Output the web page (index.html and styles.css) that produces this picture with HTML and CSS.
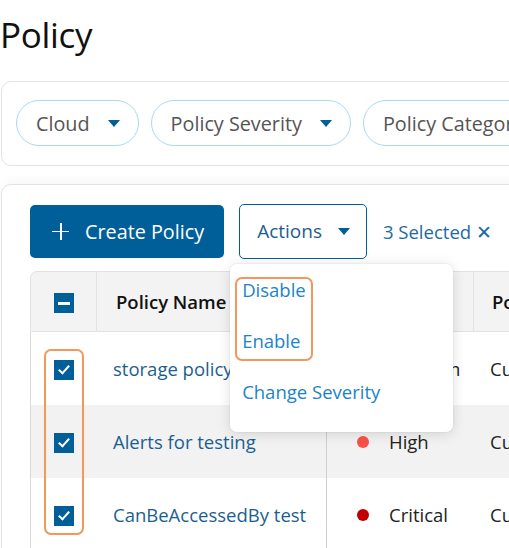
FILE: index.html
```html
<!DOCTYPE html>
<html lang="en">
<head>
  <meta charset="UTF-8">
  <meta name="viewport" content="width=device-width, initial-scale=1.0">
  <title>Policy</title>
  <link rel="stylesheet" href="styles.css">
</head>
<body>
  <div class="page">
    <h1 class="page-title">Policy</h1>

    <div class="card filters">
      <button class="pill">Cloud <span class="caret"></span></button>
      <button class="pill">Policy Severity <span class="caret"></span></button>
      <button class="pill">Policy Category <span class="caret"></span></button>
      <button class="pill">Policy Type <span class="caret"></span></button>
    </div>

    <div class="card list">
      <div class="toolbar">
        <button class="btn-primary"><span class="plus"></span>Create Policy</button>
        <div class="actions">
          <button class="btn-outline">Actions <span class="caret"></span></button>
          <div class="menu">
            <div class="menu-item">Disable</div>
            <div class="menu-item">Enable</div>
            <div class="menu-item">Change Severity</div>
            <div class="mark mark-menu"></div>
          </div>
        </div>
        <span class="selected">3 Selected &#x2715;</span>
      </div>

      <div class="table-wrap">
        <table class="grid">
          <thead>
            <tr>
              <th class="col-check"><span class="check partial"></span></th>
              <th class="col-name">Policy Name</th>
              <th class="col-sev">Severity <span class="sort">&#x21C5;</span></th>
              <th class="col-cat">Policy Category</th>
            </tr>
          </thead>
          <tbody>
            <tr>
              <td class="col-check"><span class="check on"></span></td>
              <td class="col-name"><a href="#">storage policy</a></td>
              <td class="col-sev"><span class="dot medium"></span>Medium</td>
              <td class="col-cat">Custom</td>
            </tr>
            <tr class="alt">
              <td class="col-check"><span class="check on"></span></td>
              <td class="col-name"><a href="#">Alerts for testing</a></td>
              <td class="col-sev"><span class="dot high"></span>High</td>
              <td class="col-cat">Custom</td>
            </tr>
            <tr>
              <td class="col-check"><span class="check on"></span></td>
              <td class="col-name"><a href="#">CanBeAccessedBy test</a></td>
              <td class="col-sev"><span class="dot critical"></span>Critical</td>
              <td class="col-cat">Custom</td>
            </tr>
          </tbody>
        </table>
        <div class="mark mark-checks"></div>
      </div>
    </div>
  </div>
</body>
</html>
```

FILE: styles.css
```css
html, body { margin: 0; padding: 0; overflow: hidden; background: #fff; }
body { font-family: "Open Sans", "Noto Sans", Arial, sans-serif; color: #222; }
.page { width: 900px; }
.page-title { font-size: 35px; font-weight: 400; margin: 0; padding: 13px 0 0 0; height: 81px; box-sizing: border-box; line-height: 44px; color: #111; letter-spacing: -0.3px; }

.card { background: #fff; border: 1px solid #e3e3e3; border-radius: 10px; margin-left: 1px; }
.filters { display: flex; gap: 12px; padding: 18px 14px; height: 85px; box-sizing: border-box; margin-bottom: 18px; }
.pill { display: flex; align-items: center; gap: 18px; height: 46px; padding: 0 18px 0 19px; border: 1px solid #a9d8f7; border-radius: 24px; background: #fff; font: inherit; font-size: 19.8px; color: #555; white-space: nowrap; }
.caret { display: inline-block; width: 0; height: 0; border-left: 6.5px solid transparent; border-right: 6.5px solid transparent; border-top: 7px solid #005f99; }

.list { padding: 19px 0 0 28px; height: 420px; box-sizing: border-box; box-shadow: 0 -4px 10px rgba(0,0,0,0.03); }
.toolbar { display: flex; align-items: center; height: 54px; margin-bottom: 13px; }
.btn-primary { display: flex; align-items: center; gap: 16px; height: 53px; padding: 0 20px 0 22px; background: #005f99; color: #fff; border: none; border-radius: 5px; font: inherit; font-size: 19.8px; }
.plus { position: relative; width: 17px; height: 17px; }
.plus::before, .plus::after { content: ""; position: absolute; background: #fff; }
.plus::before { left: 8px; top: 0; width: 1.6px; height: 17px; }
.plus::after { top: 8px; left: 0; height: 1.6px; width: 17px; }
.actions { position: relative; margin-left: 15px; }
.btn-outline { display: flex; align-items: center; gap: 16px; height: 55px; padding: 0 16px 0 17px; background: #fff; color: #1d5d8c; border: 1px solid #005f99; border-radius: 5px; font: inherit; font-size: 19px; }
.selected { margin-left: 16px; font-size: 18.5px; color: #1e6aa3; white-space: nowrap; }

.menu { position: absolute; left: -9px; top: 60px; width: 223px; padding: 6px 0 9px; background: #fff; border-radius: 7px; box-shadow: 0 2px 14px rgba(0,0,0,0.13), 0 0 0 1px rgba(0,0,0,0.03); z-index: 5; }
.menu-item { height: 51px; line-height: 40px; padding: 0 12px; font-size: 18.5px; color: #1a84c6; }
.menu-item:last-of-type { height: 44px; }

.mark { position: absolute; border: 2px solid #f4975d; border-radius: 7px; box-sizing: border-box; pointer-events: none; }
.mark-menu { left: 5px; top: 13px; width: 78px; height: 84px; }
.mark-checks { left: 14px; top: 78px; width: 40px; height: 186px; }

.table-wrap { position: relative; }
.grid { border-collapse: separate; border-spacing: 0; table-layout: fixed; width: 800px; font-size: 18.5px; }
.grid th, .grid td { box-sizing: border-box; }
.grid th { height: 61px; background: #f3f3f4; text-align: left; font-weight: 600; color: #111; border-top: 1px solid #e2e2e2; border-bottom: 1px solid #e2e2e2; border-right: 1px solid #e2e2e2; padding: 0; white-space: nowrap; }
.grid th:first-child { border-left: 1px solid #e2e2e2; border-top-left-radius: 7px; }
.grid td { height: 73px; padding: 0; white-space: nowrap; color: #222; }
.grid td:first-child { border-left: 1px solid #d9d9d9; }
.grid tr.alt td { background: #f2f2f3; }
.col-check { width: 67px; text-align: center !important; }
.col-name { width: 230px; }
.grid th.col-name { padding-left: 19px; }
.grid td.col-name { padding-left: 16px; border-right: 1px solid #cfcfcf; }
.col-sev { width: 147px; }
.grid td.col-sev { padding-left: 30px; }
.grid th.col-sev { padding-left: 30px; }
.col-cat { width: 356px; }
.grid th.col-cat { padding-left: 18px; }
.grid td.col-cat { padding-left: 16px; }
.grid a { color: #1b5f8f; text-decoration: none; }
.sort { color: #999; font-size: 14px; }

.check { display: inline-block; width: 20px; height: 20px; background: #005f99; position: relative; vertical-align: middle; top: -1px; }
.check.partial::after { content: ""; position: absolute; left: 4px; top: 8.5px; width: 12px; height: 3px; background: #fff; }
.check.on::after { content: ""; position: absolute; left: 7px; top: 3px; width: 4px; height: 9px; border: solid #fff; border-width: 0 2.5px 2.5px 0; transform: rotate(42deg); }

.dot { display: inline-block; width: 12px; height: 12px; border-radius: 50%; margin-right: 20px; vertical-align: 1px; }
.dot.medium { background: #f59a23; }
.dot.high { background: #fa514a; }
.dot.critical { background: #c00000; }
```
